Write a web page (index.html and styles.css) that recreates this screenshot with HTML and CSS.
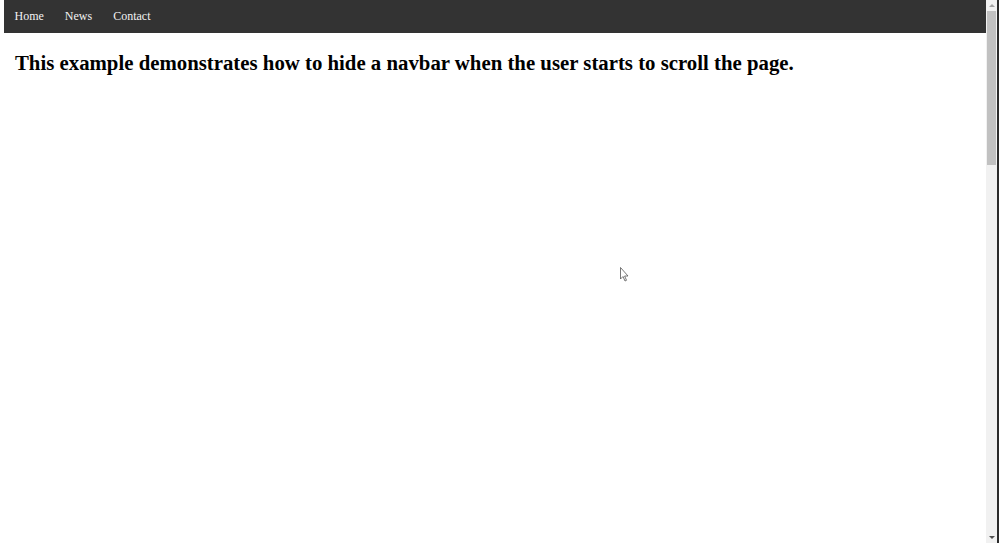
FILE: index.html
```html
<!DOCTYPE html>
<html>
<head>
<meta charset="utf-8">
<link rel="stylesheet" href="styles.css">
</head>
<body>
<div class="page">
  <div class="main">
    <nav class="navbar">
      <a href="#" class="nav-link">Home</a>
      <a href="#" class="nav-link">News</a>
      <a href="#" class="nav-link">Contact</a>
    </nav>
    <div class="content">
      <p class="lead">This example demonstrates how to hide a navbar when the user starts to scroll the page.</p>
    </div>
    <svg class="cursor" width="10" height="16" viewBox="0 0 10 16">
      <path d="M0.5 0.5 L0.5 12 L3 9.5 L5 14 L6.5 13.3 L4.6 9 L8 9 Z" fill="#fff" stroke="#555" stroke-width="0.8" stroke-linejoin="round"/>
    </svg>
  </div>
  <div class="scrollbar">
    <div class="sb-btn"><span class="arrow-up"></span></div>
    <div class="sb-track">
      <div class="sb-thumb"></div>
    </div>
    <div class="sb-btn"><span class="arrow-down"></span></div>
  </div>
  <div class="edge"></div>
</div>
</body>
</html>
```
FILE: styles.css
```css
html, body {
  margin: 0;
  padding: 0;
  height: 100%;
  overflow: hidden;
  background: #fff;
}
.page {
  display: flex;
  height: 100vh;
}
.main {
  flex: 1;
  padding-left: 4px;
  position: relative;
}
.navbar {
  display: flex;
  background: #333;
  height: 33px;
}
.nav-link {
  display: block;
  padding: 10px 10.5px;
  color: #f2f2f2;
  text-decoration: none;
  font-family: "Liberation Serif", "Times New Roman", serif;
  font-size: 12px;
  line-height: 13px;
}
.content {
  padding: 18px 11px 0;
}
.lead {
  margin: 0;
  font-family: "Liberation Serif", "Times New Roman", serif;
  font-weight: bold;
  font-size: 20.8px;
  line-height: 24px;
  color: #000;
}
.cursor {
  position: absolute;
  left: 620px;
  top: 267px;
}
.scrollbar {
  width: 11px;
  background: #f1f1f1;
  display: flex;
  flex-direction: column;
}
.sb-btn {
  height: 11px;
  display: flex;
  align-items: center;
  justify-content: center;
}
.arrow-up {
  width: 0;
  height: 0;
  border-left: 3px solid transparent;
  border-right: 3px solid transparent;
  border-bottom: 3px solid #a3a3a3;
}
.arrow-down {
  width: 0;
  height: 0;
  border-left: 3px solid transparent;
  border-right: 3px solid transparent;
  border-top: 3px solid #505050;
}
.sb-track {
  flex: 1;
  padding: 0 1px;
}
.sb-thumb {
  height: 154px;
  background: #c1c1c1;
}
.edge {
  width: 2px;
  background: #2b2b2b;
}
```
